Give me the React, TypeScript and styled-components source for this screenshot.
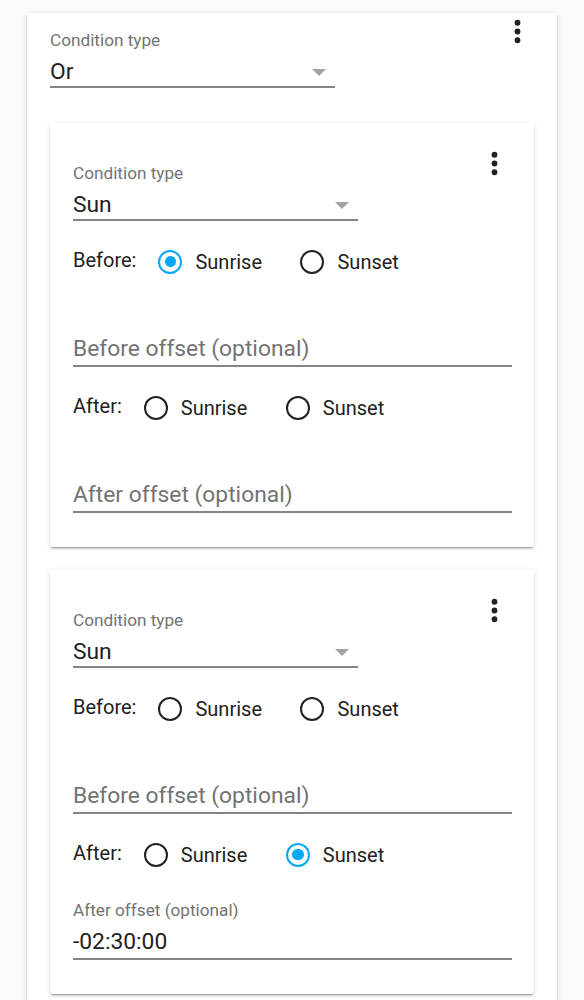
import React from "react";
import styled, { createGlobalStyle } from "styled-components";

const GlobalStyle = createGlobalStyle`
  html, body {
    margin: 0;
    padding: 0;
    background: #fafafa;
    font-family: Roboto, "Liberation Sans", Arial, sans-serif;
    -webkit-font-smoothing: antialiased;
  }
`;

const Page = styled.div`
  padding: 13px 27px 0;
  height: 987px;
  overflow: hidden;
`;

const OuterCard = styled.div`
  position: relative;
  background: #ffffff;
  padding: 19px 23px 23px;
  box-shadow: 0 2px 2px 0 rgba(0, 0, 0, 0.14), 0 1px 5px 0 rgba(0, 0, 0, 0.12),
    0 3px 1px -2px rgba(0, 0, 0, 0.2);
`;

const CardStack = styled.div`
  display: flex;
  flex-direction: column;
  gap: 23px;
  margin-top: 35px;
`;

const ConditionCard = styled.div`
  position: relative;
  background: #ffffff;
  border-radius: 3px;
  padding: 42px 23px 34px;
  box-shadow: 0 2px 2px 0 rgba(0, 0, 0, 0.14), 0 1px 5px 0 rgba(0, 0, 0, 0.12),
    0 3px 1px -2px rgba(0, 0, 0, 0.2);
`;

const MenuButton = styled.button<{ $top: number }>`
  position: absolute;
  top: ${(p) => p.$top}px;
  right: 22.5px;
  width: 35px;
  height: 35px;
  padding: 0;
  border: none;
  background: transparent;
  color: #212121;
  display: flex;
  align-items: center;
  justify-content: center;
`;

const SelectField = styled.div`
  width: 285px;
  border-bottom: 2px solid #858585;
  padding-bottom: 0.5px;
`;

const TextField = styled.div`
  border-bottom: 2px solid #858585;
  padding-bottom: 2.5px;
  margin-right: -1px;
`;

const FieldLabel = styled.div`
  font-size: 17.2px;
  line-height: 17px;
  height: 20px;
  color: #737373;
  margin-bottom: 4px;
`;

const FieldValue = styled.div<{ $placeholder?: boolean }>`
  display: flex;
  align-items: center;
  justify-content: space-between;
  font-size: 22.8px;
  line-height: 28px;
  height: 28px;
  padding-top: 1.5px;
  color: ${(p) => (p.$placeholder ? "#737373" : "#212121")};
`;

const Arrow = styled.span`
  width: 0;
  height: 0;
  border-left: 7px solid transparent;
  border-right: 7px solid transparent;
  border-top: 7px solid #a3a3a3;
  margin: 2.5px 9px 0 0;
`;

const RadioRow = styled.div`
  display: flex;
  align-items: center;
  height: 48px;
  margin: 16.5px 0 23.5px;
`;

const RowLabel = styled.span`
  font-size: 20px;
  color: #212121;
  margin-right: 22px;
  padding-bottom: 3px;
`;

const RadioGroup = styled.div`
  display: flex;
  align-items: center;
  gap: 38.5px;
`;

const RadioItem = styled.label`
  display: flex;
  align-items: center;
  gap: 13px;
  font-size: 20px;
  color: #212121;
`;

const RadioCircle = styled.span<{ $checked?: boolean }>`
  box-sizing: border-box;
  width: 24px;
  height: 24px;
  border-radius: 50%;
  border: 2.8px solid ${(p) => (p.$checked ? "#03a9f4" : "#212121")};
  display: grid;
  place-items: center;

  &::after {
    content: "";
    width: 11.5px;
    height: 11.5px;
    border-radius: 50%;
    background: ${(p) => (p.$checked ? "#03a9f4" : "transparent")};
  }
`;

const DotsIcon = () => (
  <svg width="35" height="35" viewBox="0 0 24 24" fill="currentColor">
    <path d="M12,16A2,2 0 0,1 14,18A2,2 0 0,1 12,20A2,2 0 0,1 10,18A2,2 0 0,1 12,16M12,10A2,2 0 0,1 14,12A2,2 0 0,1 12,14A2,2 0 0,1 10,12A2,2 0 0,1 12,10M12,4A2,2 0 0,1 14,6A2,2 0 0,1 12,8A2,2 0 0,1 10,6A2,2 0 0,1 12,4Z" />
  </svg>
);

const Select = ({ label, value }: { label: string; value: string }) => (
  <SelectField>
    <FieldLabel>{label}</FieldLabel>
    <FieldValue>
      <span>{value}</span>
      <Arrow />
    </FieldValue>
  </SelectField>
);

const OffsetField = ({ label, value }: { label: string; value?: string }) => (
  <TextField>
    <FieldLabel>{value ? label : ""}</FieldLabel>
    <FieldValue $placeholder={!value}>{value ? value : label}</FieldValue>
  </TextField>
);

type Choice = "sunrise" | "sunset" | null;

const SunRow = ({ label, choice }: { label: string; choice: Choice }) => (
  <RadioRow>
    <RowLabel>{label}</RowLabel>
    <RadioGroup>
      <RadioItem>
        <RadioCircle $checked={choice === "sunrise"} />
        Sunrise
      </RadioItem>
      <RadioItem>
        <RadioCircle $checked={choice === "sunset"} />
        Sunset
      </RadioItem>
    </RadioGroup>
  </RadioRow>
);

type SunCondition = {
  before: Choice;
  beforeOffset?: string;
  after: Choice;
  afterOffset?: string;
};

const conditions: SunCondition[] = [
  { before: "sunrise", after: null },
  { before: null, after: "sunset", afterOffset: "-02:30:00" },
];

export default function App() {
  return (
    <>
      <GlobalStyle />
      <Page>
        <OuterCard>
          <MenuButton $top={0.5}>
            <DotsIcon />
          </MenuButton>
          <Select label="Condition type" value="Or" />
          <CardStack>
            {conditions.map((c, i) => (
              <ConditionCard key={i}>
                <MenuButton $top={23}>
                  <DotsIcon />
                </MenuButton>
                <Select label="Condition type" value="Sun" />
                <SunRow label="Before:" choice={c.before} />
                <OffsetField label="Before offset (optional)" value={c.beforeOffset} />
                <SunRow label="After:" choice={c.after} />
                <OffsetField label="After offset (optional)" value={c.afterOffset} />
              </ConditionCard>
            ))}
          </CardStack>
        </OuterCard>
      </Page>
    </>
  );
}
